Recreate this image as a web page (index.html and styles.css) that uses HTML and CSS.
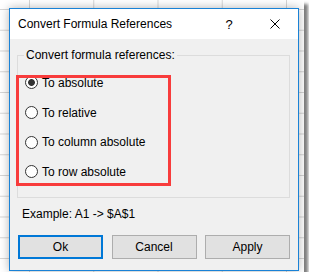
FILE: index.html
```html
<!DOCTYPE html>
<html lang="en">
<head>
  <meta charset="UTF-8" />
  <title>Convert Formula References</title>
  <link rel="stylesheet" href="styles.css">
</head>
<body>
  <div class="screen">
    <div class="dialog">
      <div class="titlebar">
        <span class="title">Convert Formula References</span>
        <span class="tb-btn help">?</span>
        <span class="tb-btn close">
          <svg width="10" height="10" viewBox="0 0 10 10"><path d="M0.5 0.5L9.5 9.5M9.5 0.5L0.5 9.5" stroke="#000" stroke-width="1" fill="none"/></svg>
        </span>
      </div>

      <div class="content">
        <fieldset class="group">
          <legend>Convert formula references:</legend>
          <div class="options">
            <label class="option"><span class="radio checked"></span>To absolute</label>
            <label class="option"><span class="radio"></span>To relative</label>
            <label class="option"><span class="radio"></span>To column absolute</label>
            <label class="option"><span class="radio"></span>To row absolute</label>
            <div class="highlight"></div>
          </div>
        </fieldset>

        <p class="example">Example: A1 -&gt; $A$1</p>

        <div class="buttons">
          <button class="btn default">Ok</button>
          <button class="btn">Cancel</button>
          <button class="btn">Apply</button>
        </div>
      </div>
    </div>
  </div>
</body>
</html>
```

FILE: styles.css
```css
body {
  margin: 0;
  background: #fff;
  font-family: 'Liberation Sans', Arial, sans-serif;
  font-size: 12px;
  color: #000;
}

.screen {
  width: 304px;
  height: 272px;
  box-sizing: border-box;
  padding: 8px 0 0 9px;
  overflow: hidden;
  background-color: #fff;
  background-image:
    linear-gradient(to right, #d6d6d6 1px, transparent 1px),
    linear-gradient(to bottom, #d6d6d6 1px, transparent 1px);
  background-size: 64.25px 100%, 100% 20.75px;
  background-position: 29px 0, 0 9px;
  box-shadow: 4px 4px 3px rgba(0,0,0,0.5);
}

.dialog {
  width: 290px;
  height: 263px;
  box-sizing: border-box;
  border: 1px solid #1a82d6;
  background: #f0f0f0;
  box-shadow: 0 0 9px rgba(0,0,0,0.3);
}

.titlebar {
  display: flex;
  align-items: center;
  height: 30px;
  background: #fff;
}

.title {
  padding-left: 8px;
  flex: 1;
}

.tb-btn {
  width: 46px;
  height: 30px;
  display: flex;
  align-items: center;
  justify-content: center;
}

.help {
  font-size: 13px;
}

.content {
  padding: 9px 8px 0 7px;
}

.group {
  margin: 0;
  padding: 0 0 10px 0;
  min-width: 0;
  border: 1px solid #dcdcdc;
}

.group legend {
  margin-left: 6px;
  padding: 0 2px;
  line-height: 14px;
}

.options {
  position: relative;
  padding-top: 6px;
}

.option {
  display: flex;
  align-items: center;
  height: 29.7px;
  padding-left: 7px;
}

.radio {
  width: 13px;
  height: 13px;
  box-sizing: border-box;
  border: 1px solid #333;
  border-radius: 50%;
  background: #fff;
  margin-right: 4px;
}

.radio.checked {
  background: radial-gradient(circle, #333 3px, #fff 3.8px);
}

.highlight {
  position: absolute;
  left: -2px;
  top: 13px;
  width: 155px;
  height: 111px;
  box-sizing: border-box;
  border: 3px solid #f83c3c;
  pointer-events: none;
}

.example {
  margin: 9px 0 0 5px;
  line-height: 14px;
}

.buttons {
  display: flex;
  justify-content: space-between;
  margin: 14px 0 0 1px;
}

.btn {
  width: 85px;
  height: 24px;
  box-sizing: border-box;
  border: 1px solid #adadad;
  background: #e1e1e1;
  font-family: inherit;
  font-size: 12px;
  color: #000;
  padding: 0;
}

.btn.default {
  border: 2px solid #0078d7;
}
```
